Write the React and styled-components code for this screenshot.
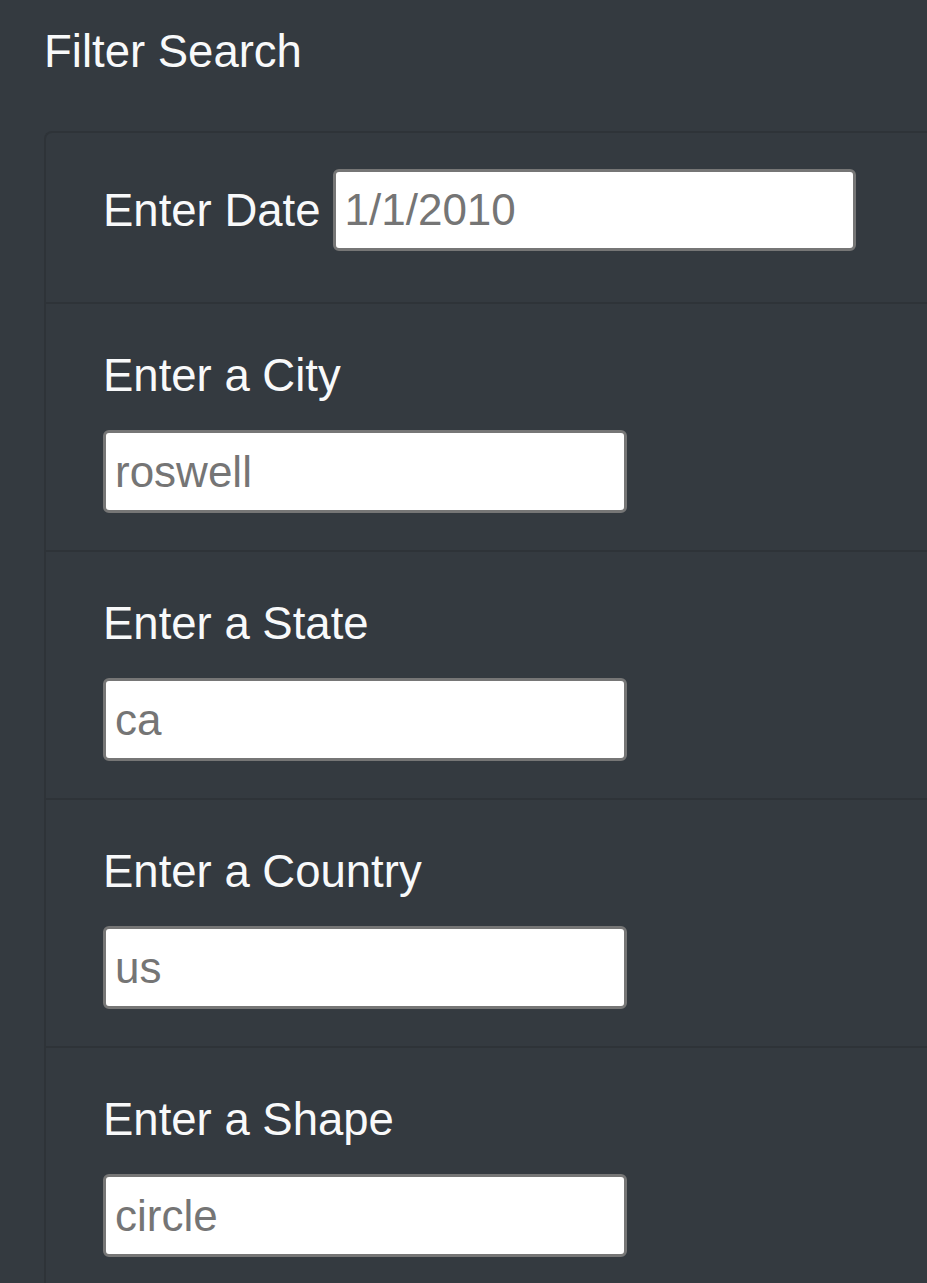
import React from "react";
import styled, { createGlobalStyle } from "styled-components";

const GlobalStyle = createGlobalStyle`
  html, body {
    margin: 0;
    padding: 0;
    background: #343a40;
    overflow: hidden;
  }
  body {
    font-family: "Liberation Sans", Arial, sans-serif;
    color: #f8f9fa;
  }
`;

const Page = styled.div`
  padding: 25px 0 0 44px;
  min-height: 100vh;
  box-sizing: border-box;
`;

const Title = styled.h5`
  margin: 0 0 53px;
  font-size: 45.5px;
  line-height: 53px;
  font-weight: 400;
  color: #f8f9fa;
`;

const ListGroup = styled.ul`
  list-style: none;
  margin: 0;
  padding: 0;
  border: 2px solid #2e3338;
  border-right: none;
  border-radius: 8px 0 0 8px;
`;

const Item = styled.li`
  display: flex;
  flex-direction: ${(p) => (p.$inline ? "row" : "column")};
  align-items: ${(p) => (p.$inline ? "center" : "flex-start")};
  gap: ${(p) => (p.$inline ? "12px" : "28px")};
  padding: ${(p) => (p.$inline ? "36px 0 51px 57px" : "45px 0 37px 57px")};
  border-top: 2px solid #2e3338;
  &:first-child {
    border-top: none;
  }
`;

const Label = styled.label`
  font-size: 45.5px;
  line-height: 53px;
  color: #f8f9fa;
  white-space: nowrap;
`;

const Field = styled.input`
  box-sizing: border-box;
  width: ${(p) => (p.$inline ? "523px" : "524px")};
  height: ${(p) => (p.$inline ? "82px" : "83px")};
  padding: 0 9px;
  border: 3px solid #767676;
  border-radius: 6px;
  background: #fff;
  font-family: "Liberation Sans", Arial, sans-serif;
  font-size: 44px;
  color: #757575;
  outline: none;
`;

const fields = [
  { id: "city", label: "Enter a City", value: "roswell" },
  { id: "state", label: "Enter a State", value: "ca" },
  { id: "country", label: "Enter a Country", value: "us" },
  { id: "shape", label: "Enter a Shape", value: "circle" },
];

export default function App() {
  return (
    <>
      <GlobalStyle />
      <Page>
        <Title>Filter Search</Title>
        <ListGroup>
          <Item $inline>
            <Label htmlFor="datetime">Enter Date</Label>
            <Field $inline id="datetime" type="text" defaultValue="1/1/2010" />
          </Item>
          {fields.map((f) => (
            <Item key={f.id}>
              <Label htmlFor={f.id}>{f.label}</Label>
              <Field id={f.id} type="text" defaultValue={f.value} />
            </Item>
          ))}
        </ListGroup>
      </Page>
    </>
  );
}
